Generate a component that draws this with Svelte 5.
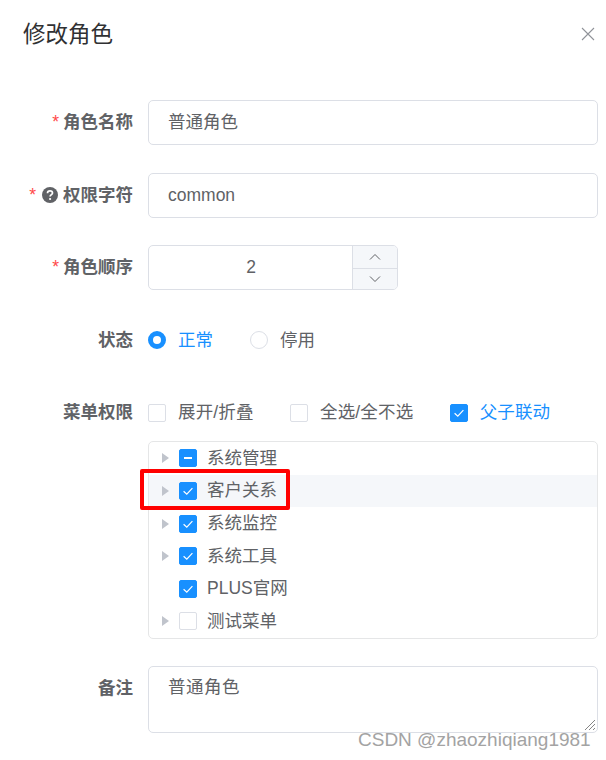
<script>
	let tree = [
		{ label: '系统管理', arrow: true, state: 'half' },
		{ label: '客户关系', arrow: true, state: 'on', active: true },
		{ label: '系统监控', arrow: true, state: 'on' },
		{ label: '系统工具', arrow: true, state: 'on' },
		{ label: 'PLUS官网', arrow: false, state: 'on' },
		{ label: '测试菜单', arrow: true, state: 'off' }
	];
</script>

{#snippet box(state)}
	<span class="box" class:on={state !== 'off'}>
		{#if state === 'on'}
			<svg width="18" height="18" viewBox="0 0 18 18"><path d="M4.6 9.2 L7.8 12.2 L13.4 6.2" fill="none" stroke="#fff" stroke-width="1.2" /></svg>
		{:else if state === 'half'}
			<span class="dash"></span>
		{/if}
	</span>
{/snippet}

<div class="dialog">
	<header class="head">
		<h2>修改角色</h2>
		<svg class="close" width="14" height="14" viewBox="0 0 14 14"><path d="M1 1 L13 13 M13 1 L1 13" stroke="#909399" stroke-width="1.1" fill="none" /></svg>
	</header>

	<form class="form">
		<div class="row">
			<div class="label"><i>*</i>角色名称</div>
			<div class="input">普通角色</div>
		</div>
		<div class="row">
			<div class="label">
				<i class="far">*</i>
				<svg class="help" width="16" height="16" viewBox="0 0 16 16">
					<circle cx="8" cy="8" r="8" fill="#606266" />
					<path d="M5.5 6.2 C5.5 4.7 6.6 3.9 8 3.9 C9.5 3.9 10.5 4.8 10.5 6 C10.5 7.6 8.1 7.7 8.1 9.6" fill="none" stroke="#fff" stroke-width="1.7" />
					<circle cx="8.1" cy="12" r="1.1" fill="#fff" />
				</svg>
				权限字符
			</div>
			<div class="input">common</div>
		</div>
		<div class="row">
			<div class="label"><i>*</i>角色顺序</div>
			<div class="number">
				<span class="value">2</span>
				<div class="steps">
					<span class="step up"><svg width="12" height="8" viewBox="0 0 12 8"><path d="M1 6.5 L6 1.5 L11 6.5" fill="none" stroke="#606266" stroke-width="1" /></svg></span>
					<span class="step"><svg width="12" height="8" viewBox="0 0 12 8"><path d="M1 1.5 L6 6.5 L11 1.5" fill="none" stroke="#606266" stroke-width="1" /></svg></span>
				</div>
			</div>
		</div>
		<div class="row">
			<div class="label">状态</div>
			<div class="options radios">
				<span class="option blue"><span class="radio on"></span>正常</span>
				<span class="option"><span class="radio"></span>停用</span>
			</div>
		</div>
		<div class="row">
			<div class="label">菜单权限</div>
			<div class="options checks">
				<span class="option">{@render box('off')}展开/折叠</span>
				<span class="option">{@render box('off')}全选/全不选</span>
				<span class="option blue">{@render box('on')}父子联动</span>
			</div>
		</div>
		<div class="row tree-row">
			<div class="label"></div>
			<div class="tree">
				{#each tree as node}
					<div class="node" class:active={node.active}>
						<span class="arrow" class:hidden={!node.arrow}></span>
						{@render box(node.state)}
						<span class="node-label">{node.label}</span>
						{#if node.active}<span class="mark"></span>{/if}
					</div>
				{/each}
			</div>
		</div>
		<div class="row area-row">
			<div class="label">备注</div>
			<div class="area">
				普通角色
				<svg class="grip" width="12" height="12" viewBox="0 0 12 12"><path d="M1 11 L11 1 M5 11 L11 5 M9 11 L11 9" stroke="#666" stroke-width="0.8" fill="none" /></svg>
			</div>
		</div>
	</form>
	<span class="watermark">CSDN @zhaozhiqiang1981</span>
</div>

<style>
	:global(body) {
		background: #fff;
	}

	.dialog {
		position: relative;
		width: 606px;
		height: 760px;
		overflow: hidden;
		font-family: 'Liberation Sans', 'Noto Sans CJK SC', sans-serif;
		font-size: 17.5px;
		line-height: 21px;
		color: #606266;
	}

	.head {
		display: flex;
		justify-content: space-between;
		align-items: center;
		height: 68px;
		padding: 0 11px 0 23px;
	}

	.head h2 {
		margin: 0;
		font-size: 22.5px;
		line-height: 27px;
		font-weight: 400;
		color: #303133;
	}

	.form {
		display: flex;
		flex-direction: column;
		gap: 27.5px;
		padding: 32px 8px 0 0;
	}

	.row {
		display: flex;
		gap: 15px;
		min-height: 45px;
	}

	.label {
		display: flex;
		justify-content: flex-end;
		align-items: center;
		gap: 5px;
		width: 133px;
		height: 45px;
		font-weight: 700;
		flex-shrink: 0;
	}

	.label i {
		font-style: normal;
		font-weight: 400;
		color: #ff4949;
		margin-right: -1px;
	}

	.label i.far {
		margin-right: 1px;
	}

	.input {
		flex: 1;
		display: flex;
		align-items: center;
		padding-left: 19px;
		border: 1px solid #dcdfe6;
		border-radius: 5px;
	}

	.number {
		position: relative;
		display: flex;
		width: 250px;
		height: 45px;
		box-sizing: border-box;
		border: 1px solid #dcdfe6;
		border-radius: 5px;
		overflow: hidden;
	}

	.value {
		flex: 1;
		text-align: center;
		line-height: 43px;
		padding-left: 1px;
	}

	.steps {
		display: flex;
		flex-direction: column;
		width: 45px;
		box-sizing: border-box;
		background: #f5f7fa;
		border-left: 1px solid #dcdfe6;
	}

	.step {
		flex: 1;
		display: flex;
		align-items: center;
		justify-content: center;
	}

	.step.up {
		flex: 0 0 23px;
		box-sizing: border-box;
		border-bottom: 1px solid #dcdfe6;
	}

	.options {
		display: flex;
		align-items: center;
	}

	.option {
		display: inline-flex;
		align-items: center;
		gap: 12px;
	}

	.radios {
		gap: 37px;
	}

	.checks {
		gap: 36.4px;
		letter-spacing: 0.15px;
	}

	.blue {
		color: #1890ff;
	}

	.radio {
		width: 18px;
		height: 18px;
		box-sizing: border-box;
		border: 1px solid #dcdfe6;
		border-radius: 50%;
	}

	.radio.on {
		border: 5.5px solid #1890ff;
	}

	.box {
		display: inline-flex;
		align-items: center;
		justify-content: center;
		width: 18px;
		height: 18px;
		box-sizing: border-box;
		border: 1px solid #dcdfe6;
		border-radius: 2px;
		background: #fff;
		flex-shrink: 0;
	}

	.box svg {
		flex-shrink: 0;
		margin: -1px;
	}

	.box.on {
		background: #1890ff;
		border-color: #1890ff;
	}

	.dash {
		width: 8px;
		height: 2px;
		background: #fff;
	}

	.tree-row {
		margin-top: -22px;
	}

	.tree {
		flex: 1;
		height: 198px;
		box-sizing: border-box;
		padding-top: 0.6px;
		border: 1px solid #e5e6e7;
		border-radius: 5px;
		display: flex;
		flex-direction: column;
	}

	.node {
		position: relative;
		display: flex;
		align-items: center;
		height: 32.6px;
		padding-left: 13px;
	}

	.node.active {
		background: #f5f7fa;
	}

	.arrow {
		width: 0;
		height: 0;
		border-left: 7px solid #c0c4cc;
		border-top: 5px solid transparent;
		border-bottom: 5px solid transparent;
		margin-right: 10px;
	}

	.arrow.hidden {
		border-left-color: transparent;
	}

	.node-label {
		margin-left: 10px;
	}

	.mark {
		position: absolute;
		left: -9px;
		top: -6px;
		width: 150px;
		height: 41px;
		box-sizing: border-box;
		border: 4px solid #f00;
		border-radius: 2px;
	}

	.area {
		position: relative;
		flex: 1;
		height: 67px;
		box-sizing: border-box;
		padding: 10px 19px;
		border: 1px solid #dcdfe6;
		border-radius: 5px;
		letter-spacing: 0.5px;
	}

	.grip {
		position: absolute;
		right: 1px;
		bottom: 1px;
	}

	.watermark {
		position: absolute;
		left: 358px;
		top: 729px;
		font-size: 19px;
		color: #a3a3a3;
	}
</style>
